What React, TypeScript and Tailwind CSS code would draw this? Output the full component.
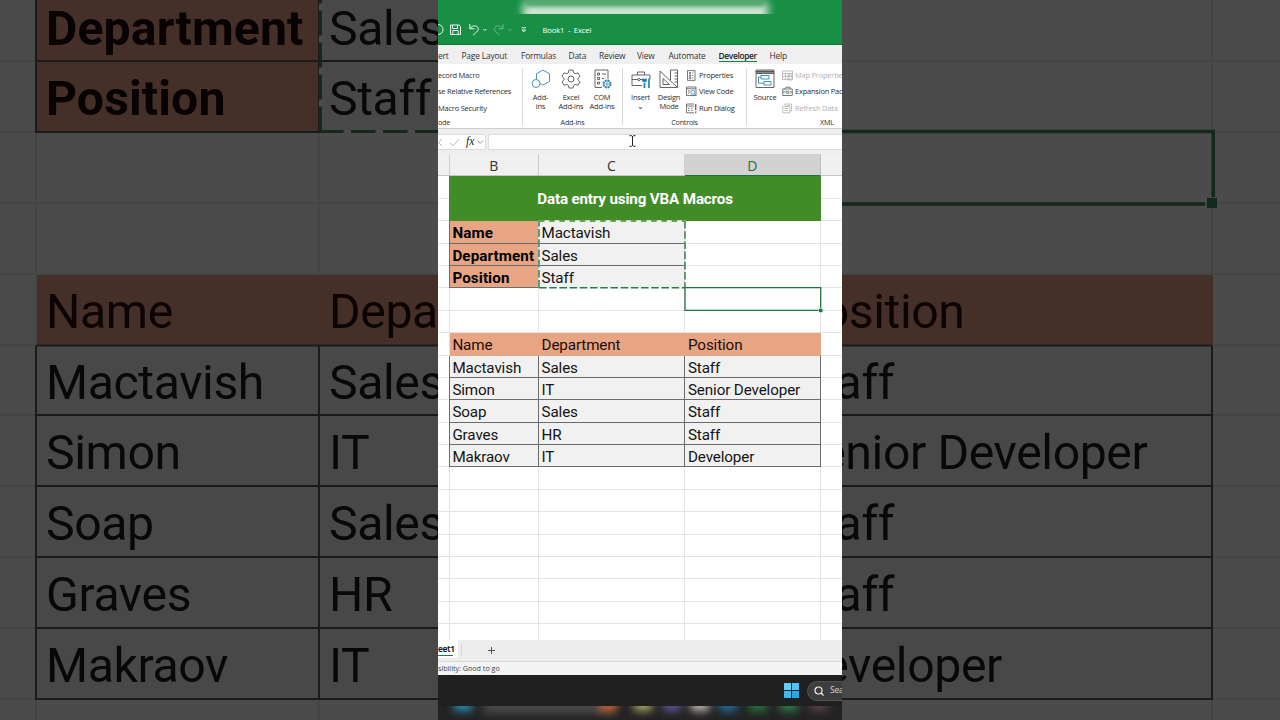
import type { ReactNode } from "react";
import clsx from "clsx";

type RowKind = "form" | "head" | "data" | "empty";

interface SheetRow {
  kind: RowKind;
  cells: string[];
}

const empty: SheetRow = { kind: "empty", cells: ["", "", ""] };

const formRows: SheetRow[] = [
  { kind: "form", cells: ["Name", "Mactavish", ""] },
  { kind: "form", cells: ["Department", "Sales", ""] },
  { kind: "form", cells: ["Position", "Staff", ""] },
];

const tableRows: SheetRow[] = [
  { kind: "head", cells: ["Name", "Department", "Position"] },
  { kind: "data", cells: ["Mactavish", "Sales", "Staff"] },
  { kind: "data", cells: ["Simon", "IT", "Senior Developer"] },
  { kind: "data", cells: ["Soap", "Sales", "Staff"] },
  { kind: "data", cells: ["Graves", "HR", "Staff"] },
  { kind: "data", cells: ["Makraov", "IT", "Developer"] },
];

const sheetTheme = {
  row: "h-[22.4px] text-[15.2px] tracking-[-0.12px] leading-[24.2px]",
  cols: ["w-[89.2px]", "w-[146.4px]", "w-[135.5px]"],
  first: "w-[11.6px]",
  right: "border-r",
  bottom: "border-b",
  pad: "pl-[2.8px]",
  line: "border-[#e4e4e4]",
  ink: "border-[#6c6c6c]",
  orange: "bg-[#e8a584] text-[#1c0d06]",
  orangeLine: "border-[#e8a584]",
  grey: "bg-[#f1f1f1] text-[#141414]",
  bold: "font-bold text-black tracking-[0.1px]",
};

// enlarged, dimmed copy that fills the space on both sides
const backdropTheme: typeof sheetTheme = {
  row: "h-[70.8px] text-[48.2px] tracking-[-0.4px] leading-[73px]",
  cols: ["w-[283px]", "w-[463px]", "w-[429.5px]"],
  first: "w-[37px]",
  right: "border-r-2",
  bottom: "border-b-2",
  pad: "pl-[9px]",
  line: "border-[#454545]",
  ink: "border-[#1b1b1b]",
  orange: "bg-[#453029] text-[#0c0303]",
  orangeLine: "border-[#453029]",
  grey: "bg-[#484848] text-[#080808]",
  bold: "font-bold text-[#080202] tracking-[0.1px]",
};

function Row({ row, theme }: { row: SheetRow; theme: typeof sheetTheme }) {
  const { kind, cells } = row;
  const boxed = kind === "form" || kind === "data";

  return (
    <div className={clsx("flex w-full shrink-0 whitespace-nowrap", theme.row)}>
      <div className={clsx("shrink-0", theme.first, theme.right, boxed ? theme.ink : theme.line)}>
        <div className={clsx("h-full", theme.bottom, theme.line)} />
      </div>
      {cells.map((text, i) => {
        const filled = kind === "head" || kind === "data" || (kind === "form" && i < 2);
        const orange = kind === "head" || (kind === "form" && i === 0);
        return (
          <div
            key={i}
            className={clsx(
              "shrink-0",
              theme.cols[i],
              theme.right,
              theme.bottom,
              theme.pad,
              kind === "form" && i === 0 && theme.bold,
              orange && theme.orange,
              filled && !orange && theme.grey,
              kind === "head" ? theme.orangeLine : filled ? theme.ink : theme.line,
            )}
          >
            {text}
          </div>
        );
      })}
      <div className={clsx("flex-1", theme.bottom, theme.line)} />
    </div>
  );
}

function Backdrop() {
  const rows = [...formRows.slice(1), empty, empty, ...tableRows, empty];
  return (
    <div className="absolute inset-0 overflow-hidden bg-[#4b4b4b] font-[Roboto,sans-serif]">
      <div className="-mt-[8.4px] flex flex-col">
        {rows.map((row, i) => (
          <Row key={i} row={row} theme={backdropTheme} />
        ))}
      </div>
      <svg className="absolute inset-0" width="1280" height="720" fill="none">
        <path d="M320.500 0V131.500H440" stroke="#4b4b4b" strokeWidth="3" />
        <path d="M320.500 131.500V0" stroke="#13291b" strokeWidth="3" strokeDasharray="25 7" />
        <path d="M319 131.500H440" stroke="#13291b" strokeWidth="3" strokeDasharray="24.500 7.500" />
        <path d="M36 345.500H1212" stroke="#1b1b1b" strokeWidth="1.800" />
        <path d="M800 131.500H1213.300V197M800 204H1205" stroke="#13291b" strokeWidth="3.500" />
        <path d="M1207 198h10v10h-10z" fill="#13291b" />
      </svg>
    </div>
  );
}

function TitleBar() {
  return (
    <div className="flex h-[31px] items-center border-b border-[#0f7a38] bg-[#188f45] text-white">
      <svg width="92" height="31" fill="none" stroke="currentColor" strokeWidth="0.9">
        <path d="M0 10.500a5 5 0 0 1 0 10" />
        <path d="M12.500 11h8.500l1.500 1.500V20.500h-10zM14.500 11v3.500h5V11M14.800 20.500v-4h5.400v4" />
        <path d="M31.800 10v4.800h4.800M32 14.600c2-3.800 8.300-3.600 8.300.6 0 2.200-2.800 3.600-5.300 6" />
        <path d="M45.300 15l1.500 1.500 1.500-1.500" />
        <g opacity=".4">
          <path d="M65 10v4.800h-4.800M64.800 14.600c-2-3.800-8.300-3.600-8.300.6 0 2.200 2.800 3.600 5.300 6" />
          <path d="M70.500 15l1.500 1.500 1.500-1.500" />
        </g>
        <path d="M83.500 13.800h4.500M84 16l1.800 1.800 1.800-1.800z" />
      </svg>
      <span className="ml-[12.500px] pt-[3px] text-[7.700px] tracking-[-0.180px] whitespace-pre">Book1  -  Excel</span>
    </div>
  );
}

const tabs = [
  { name: "ert", width: "w-[23.500px]" },
  { name: "Page Layout", width: "w-[59.500px]" },
  { name: "Formulas", width: "w-[47.500px]" },
  { name: "Data", width: "w-[30.500px]" },
  { name: "Review", width: "w-[38px]" },
  { name: "View", width: "w-[31.500px]" },
  { name: "Automate", width: "w-[50px]" },
  { name: "Developer", width: "w-[51px]" },
  { name: "Help", width: "w-[30px]" },
];

function Tabs() {
  return (
    <div className="flex h-[19px] bg-[#f0f0f0] text-[8.400px] leading-[21px] tracking-[-0.180px] text-[#333]">
      {tabs.map((tab) => (
        <div key={tab.name} className={clsx("shrink-0 whitespace-nowrap", tab.width)}>
          {tab.name === "Developer" ? (
            <span className="inline-block h-[17px] border-b-[1.500px] border-[#1c8043] font-semibold tracking-[-0.330px] text-[#222]">
              {tab.name}
            </span>
          ) : (
            tab.name
          )}
        </div>
      ))}
    </div>
  );
}

function BigButton({ icon, lines, className }: { icon: ReactNode; lines: string[]; className: string }) {
  return (
    <div className={clsx("flex shrink-0 flex-col items-center pt-[5px]", className)}>
      <svg width="20" height="20" viewBox="0 0 20 20" fill="none" stroke="#555" strokeWidth="0.9">
        {icon}
      </svg>
      <div className="mt-[2.500px] text-center whitespace-nowrap">
        {lines.map((line) => (
          <div key={line} className="h-[9.500px] leading-[10px]">
            {line}
          </div>
        ))}
      </div>
    </div>
  );
}

function SmallButton({ icon, label, muted }: { icon?: ReactNode; label: string; muted?: boolean }) {
  return (
    <div
      className={clsx(
        "flex h-[16.500px] items-center gap-[2px] whitespace-nowrap",
        muted && "text-[#b2b2b2]",
      )}
    >
      {icon && (
        <svg width="11" height="11" viewBox="0 0 11 11" fill="none" stroke={muted ? "#b2b2b2" : "#555"} strokeWidth="0.8">
          {icon}
        </svg>
      )}
      <span>{label}</span>
    </div>
  );
}

function Group({ label, className, labelClass, children }: { label: string; className: string; labelClass?: string; children: ReactNode }) {
  return (
    <div className={clsx("flex shrink-0 flex-col overflow-hidden", className)}>
      <div className="flex h-[52.500px]">{children}</div>
      <div className={clsx("text-[7.200px] leading-[10px]", labelClass ?? "text-center")}>{label}</div>
    </div>
  );
}

function Divider() {
  return <div className="mt-[4px] h-[57px] w-px shrink-0 bg-[#d9d9d9]" />;
}

const hexagonIcon = (
  <>
    <path d="M5.500 11V4.800L12 1l6.500 3.800v7.700L12 16l-3-1.500" stroke="#3a86ad" />
    <circle cx="5" cy="14.500" r="4" fill="white" stroke="#3a86ad" />
  </>
);

const gearIcon = (
  <>
    <path d="M8 1h4l.7 2.800 1.500.9 2.800-.8 2 3.400-2.100 2v1.500l2.100 2-2 3.400-2.800-.8-1.500.9L12 19H8l-.7-2.700-1.500-.9-2.800.8-2-3.400 2.100-2V9.300L1 7.300l2-3.400 2.800.8 1.500-.9z" />
    <circle cx="10" cy="10" r="3" />
  </>
);

const comIcon = (
  <>
    <path d="M10 18.500H3V1h13v9M5.500 4h2v2h-2zM5.500 8.500h2v2h-2zM5.500 13h2v2h-2zM10 5h4M10 9.500h2" />
    <circle cx="15" cy="15" r="3.800" stroke="#2f87ad" strokeWidth="1.500" strokeDasharray="2 1" />
    <circle cx="15" cy="15" r="3" stroke="#2f87ad" strokeWidth=".8" />
    <circle cx="15" cy="15" r="1.200" stroke="#2f87ad" strokeWidth=".8" />
  </>
);

const toolboxIcon = (
  <>
    <path d="M6.500 6V3h7v3M11 16.500H1V6h18v4M1 10.500h6M9 10.500h3" />
    <circle cx="8" cy="10.500" r="1.200" />
    <path d="M13.500 10v3M13.500 13.500V19M12 9.500v2.500h3V9.500M18 9.500V19" stroke="#2781ac" strokeWidth="1.700" />
  </>
);

const designIcon = (
  <>
    <path d="M1 2V18.500h17.500zM4 9.500V15.500h6.500z" />
    <path d="M11.500 11V1h7v17M15.500 4h3M15.500 7h3M15.500 10h3M15.500 13h3" />
  </>
);

const sourceIcon = (
  <>
    <path d="M1 1h18v17.500H1zM1 4.500h18" />
    <path d="M1 2.700h18" strokeWidth="2" />
    <path d="M6 6.500h8v3.500H6zM9 12.500h7v3.500H9zM3.500 8H6M3.500 8v6.200h5.500" stroke="#2d88b3" />
  </>
);

const propertiesIcon = <path d="M1.500.6h7.500v9.800h-7.500zM3.500 2.500h1.200v1.200H3.500zM6.200 3h1M3.500 5h1.200v1.200H3.500zM6.200 5.500h1M3.500 7.500h1.200v1.200H3.500zM6.200 8h1" />;

const codeIcon = (
  <>
    <path d="M.5 1h9.500v8.500H.5zM.5 2.800H10M2 5h2M2 7h1.500" />
    <circle cx="6.800" cy="6.300" r="2" stroke="#2d88b3" />
    <path d="m8.300 7.800 2 2" stroke="#2d88b3" />
  </>
);

const dialogIcon = (
  <>
    <path d="M8 9.800H.5V1H8M.5 3H8M2 5.300h1.500M5 5.300h1.500M2 7.500h1.500M5 7.500h1.500" />
    <path d="M9.700 1v6M9.700 8.500V10" stroke="#d13438" strokeWidth="1.300" />
  </>
);

const mapIcon = <path d="M.5 1h10v8.500H.5zM.5 3.500h10M3.500 3.500v6M.5 6.300h10M7 3.500v6M6 5h4v5H6z" />;

const packsIcon = (
  <>
    <path d="M.8 3h9.500v6.500H.8zM2.500 3 4 1.200h4V3M2.500 5l-1 1.200 1 1.200M8.500 5l1 1.200-1 1.200" />
    <path d="M4 5.200h3v2H4z" stroke="#3c7d52" />
  </>
);

const refreshIcon = <path d="M.8 3.500h7v6.300h-7zM3 3.500V1h6.500v7H8M2.500 5.500h3.500M2.500 7.500h3.500M5 2.500h3" />;

function Ribbon() {
  return (
    <div className="flex h-[65px] overflow-hidden border-b border-[#cfcfcf] bg-white text-[7.500px] tracking-[-0.220px] text-[#2e2e2e]">
      <Group label="ode" className="w-[84px]" labelClass="text-left">
        <div className="flex flex-col pt-[3px]">
          <SmallButton label="ecord Macro" />
          <SmallButton label="se Relative References" />
          <SmallButton label="Macro Security" />
        </div>
      </Group>
      <Divider />
      <Group label="Add-ins" className="w-[99px]">
        <BigButton className="w-[35px]" icon={hexagonIcon} lines={["Add-", "ins"]} />
        <BigButton className="w-[26px]" icon={gearIcon} lines={["Excel", "Add-ins"]} />
        <BigButton className="w-[36px]" icon={comIcon} lines={["COM", "Add-ins"]} />
      </Group>
      <Divider />
      <Group label="Controls" className="w-[123px]">
        <BigButton className="w-[35px]" icon={toolboxIcon} lines={["Insert", "⌄"]} />
        <BigButton className="w-[22px]" icon={designIcon} lines={["Design", "Mode"]} />
        <div className="ml-[6px] flex flex-col pt-[3px]">
          <SmallButton icon={propertiesIcon} label="Properties" />
          <SmallButton icon={codeIcon} label="View Code" />
          <SmallButton icon={dialogIcon} label="Run Dialog" />
        </div>
      </Group>
      <Divider />
      <Group label="XML" className="w-[95px]" labelClass="pl-[73px] text-left">
        <BigButton className="w-[36px]" icon={sourceIcon} lines={["Source"]} />
        <div className="-ml-px flex flex-col pt-[3px]">
          <SmallButton muted icon={mapIcon} label="Map Properties" />
          <SmallButton icon={packsIcon} label="Expansion Packs" />
          <SmallButton muted icon={refreshIcon} label="Refresh Data" />
        </div>
      </Group>
    </div>
  );
}

function FormulaBar() {
  return (
    <div className="relative flex h-[25px] items-center gap-[3px] bg-[#eeeeee]">
      <div className="flex h-[16px] w-[47.500px] items-center rounded-r-[2px] border border-l-0 border-[#dcdcdc] bg-white">
        <svg width="26" height="14" fill="none" stroke="#b0b0b0" strokeWidth="0.9">
          <path d="M4 4 .5 7.500 4 11M12 8l3 3 6-7" />
        </svg>
        <span className="ml-[2px] font-['Liberation_Serif',serif] text-[11.500px] leading-none text-[#222] italic">fx</span>
        <svg className="ml-[2.500px]" width="7" height="6" fill="none" stroke="#777" strokeWidth="0.8">
          <path d="M.5 1.500 3.300 4.300 6 1.500" />
        </svg>
      </div>
      <div className="-ml-[0.500px] h-[16px] flex-1 rounded-l-[2px] border border-r-0 border-[#dcdcdc] bg-white" />
      <svg className="absolute top-[6px] left-[190px]" width="9" height="12" fill="none" stroke="#222">
        <path d="M1.500 .7h2l1 .8 1-.8h2M4.500 1v10M1.500 11.300h2l1-.8 1 .8h2" />
      </svg>
    </div>
  );
}

function ColumnHeaders() {
  return (
    <div className="flex h-[22px] border-b border-[#c4c4c4] bg-[#f0f0f0] text-center text-[14px] leading-[23px] text-[#333]">
      <div className="w-[11.600px] shrink-0 border-r border-[#cfcfcf]" />
      <div className="w-[89.200px] shrink-0 border-r border-[#cfcfcf]">B</div>
      <div className="w-[146.400px] shrink-0 border-r border-[#cfcfcf]">C</div>
      <div className="h-[22px] w-[135.500px] shrink-0 border-r border-b-[1.500px] border-r-[#bdbdbd] border-b-[#1d7044] bg-[#d2d2d2] text-[#21704a]">
        D
      </div>
    </div>
  );
}

function Sheet() {
  const rows = [...formRows, empty, empty, ...tableRows, ...Array<SheetRow>(8).fill(empty)];
  return (
    <div className="relative h-[464px] overflow-hidden bg-white font-[Roboto,sans-serif]">
      <div className="flex h-[45.200px]">
        <div className="flex w-[11.400px] shrink-0 flex-col">
          <div className="h-[22.500px] border-b border-[#e4e4e4]" />
          <div className="h-[22.500px] border-b border-[#e4e4e4]" />
        </div>
        <div className="w-[371.300px] shrink-0 bg-[#428c28] text-center text-[15.200px] leading-[46px] font-bold tracking-[-0.160px] text-white">
          Data entry using VBA Macros
        </div>
        <div className="flex flex-1 flex-col">
          <div className="h-[22.500px] border-b border-[#e4e4e4]" />
          <div className="h-[22.500px] border-b border-[#e4e4e4]" />
        </div>
      </div>
      {rows.map((row, i) => (
        <Row key={i} row={row} theme={sheetTheme} />
      ))}
      {/* copied range and active cell */}
      <svg className="absolute inset-0" width="404" height="464" fill="none">
        <path d="M101 45H247V111.700H101z" stroke="#f4faf5" strokeWidth="1.500" />
        <path d="M101 45H247" stroke="#428c28" strokeWidth="1.500" strokeDasharray="5.500 4.700" />
        <path d="M247 45V111.700M101 111.700V45M101 111.700H247" stroke="#2b7a4b" strokeWidth="1.400" strokeDasharray="7.600 2.600" />
        <path d="M247 111.700H382.700V132M247 111V134.400H380.500" stroke="#217346" strokeWidth="1.300" />
        <path d="M381 132.700h3.500v3.500H381z" fill="#217346" />
      </svg>
    </div>
  );
}

function SheetTabs() {
  return (
    <>
      <div className="flex h-[21.500px] border-b border-[#d8d8d8] bg-[#ededed]">
        <div className="h-[18px] w-[20px] rounded-br-[3px] bg-white text-[8.200px] leading-[18px] font-bold tracking-[-0.300px] text-[#222]">
          <div className="h-[16px] w-[15px] border-b-[1.500px] border-[#1c8043]">eet1</div>
        </div>
        <div className="mt-[4px] ml-[3px] h-[12px] w-px bg-[#d5d5d5]" />
        <svg className="mt-[6px] ml-[25px]" width="9" height="9" stroke="#444" strokeWidth="0.9">
          <path d="M4.500 1v7M1 4.500h7" />
        </svg>
      </div>
      <div className="h-[13.500px] bg-[#f4f4f4] text-[7.200px] leading-[12.500px] tracking-[-0.020px] text-[#444]">
        sibility: Good to go
      </div>
    </>
  );
}

const glows = [
  { left: "left-[16px]", color: "bg-[#2a8db0]" },
  { left: "left-[161px]", color: "bg-[#c2622f]" },
  { left: "left-[196px]", color: "bg-[#a8a868]" },
  { left: "left-[225px]", color: "bg-[#5d5691]" },
  { left: "left-[253px]", color: "bg-[#bcb8b2]" },
  { left: "left-[281px]", color: "bg-[#256f9d]" },
  { left: "left-[311px]", color: "bg-[#27783f]" },
  { left: "left-[342px]", color: "bg-[#2d8149]" },
  { left: "left-[372px]", color: "bg-[#594348]" },
];

function Taskbar() {
  return (
    <>
      <div className="flex h-[31px] items-center justify-end bg-[#202020]">
        <div className="mr-[8.500px] grid grid-cols-2 gap-[0.700px]">
          <div className="size-[7px] bg-[#65cef4]" />
          <div className="size-[7px] bg-[#50c3ef]" />
          <div className="size-[7px] bg-[#40b7ee]" />
          <div className="size-[7px] bg-[#27a7e7]" />
        </div>
        <div className="flex h-[20px] w-[35px] items-center gap-[6px] overflow-hidden rounded-l-full border border-r-0 border-[#505050] bg-[#3d3d3d] pl-[6px] text-[8.500px] tracking-[-0.200px] text-[#d8d8d8]">
          <svg className="shrink-0" width="10" height="10" fill="none" stroke="#eee" strokeWidth="1.200">
            <circle cx="4.500" cy="4.500" r="3.500" />
            <path d="m7 7 2.500 2.500" />
          </svg>
          <span>Sea</span>
        </div>
      </div>
      <div className="relative h-[14px] overflow-hidden bg-[#242223]">
        <div className="absolute top-[-8px] left-[45px] h-[16px] w-[130px] bg-[#484848] blur-[4px]" />
        {glows.map((glow) => (
          <div key={glow.left} className={clsx("absolute top-[-9px] h-[14px] w-[18px] blur-[4px]", glow.left, glow.color)} />
        ))}
      </div>
    </>
  );
}

export default function App() {
  return (
    <div className="relative flex h-[720px] w-[1280px] justify-center overflow-hidden font-['Open_Sans',sans-serif]">
      <Backdrop />
      <div className="relative flex h-[720px] w-[404px] flex-col overflow-hidden bg-white">
        <div className="relative h-[14px] overflow-hidden bg-[#188f45]">
          <div className="absolute top-[2px] left-[85px] h-[20px] w-[245px] bg-[#cfe5d5] blur-[4px]" />
          <div className="absolute top-0 left-[88px] h-[6px] w-[238px] bg-[#4aa468] blur-[2px]" />
        </div>
        <TitleBar />
        <Tabs />
        <Ribbon />
        <FormulaBar />
        <ColumnHeaders />
        <Sheet />
        <SheetTabs />
        <Taskbar />
      </div>
    </div>
  );
}
